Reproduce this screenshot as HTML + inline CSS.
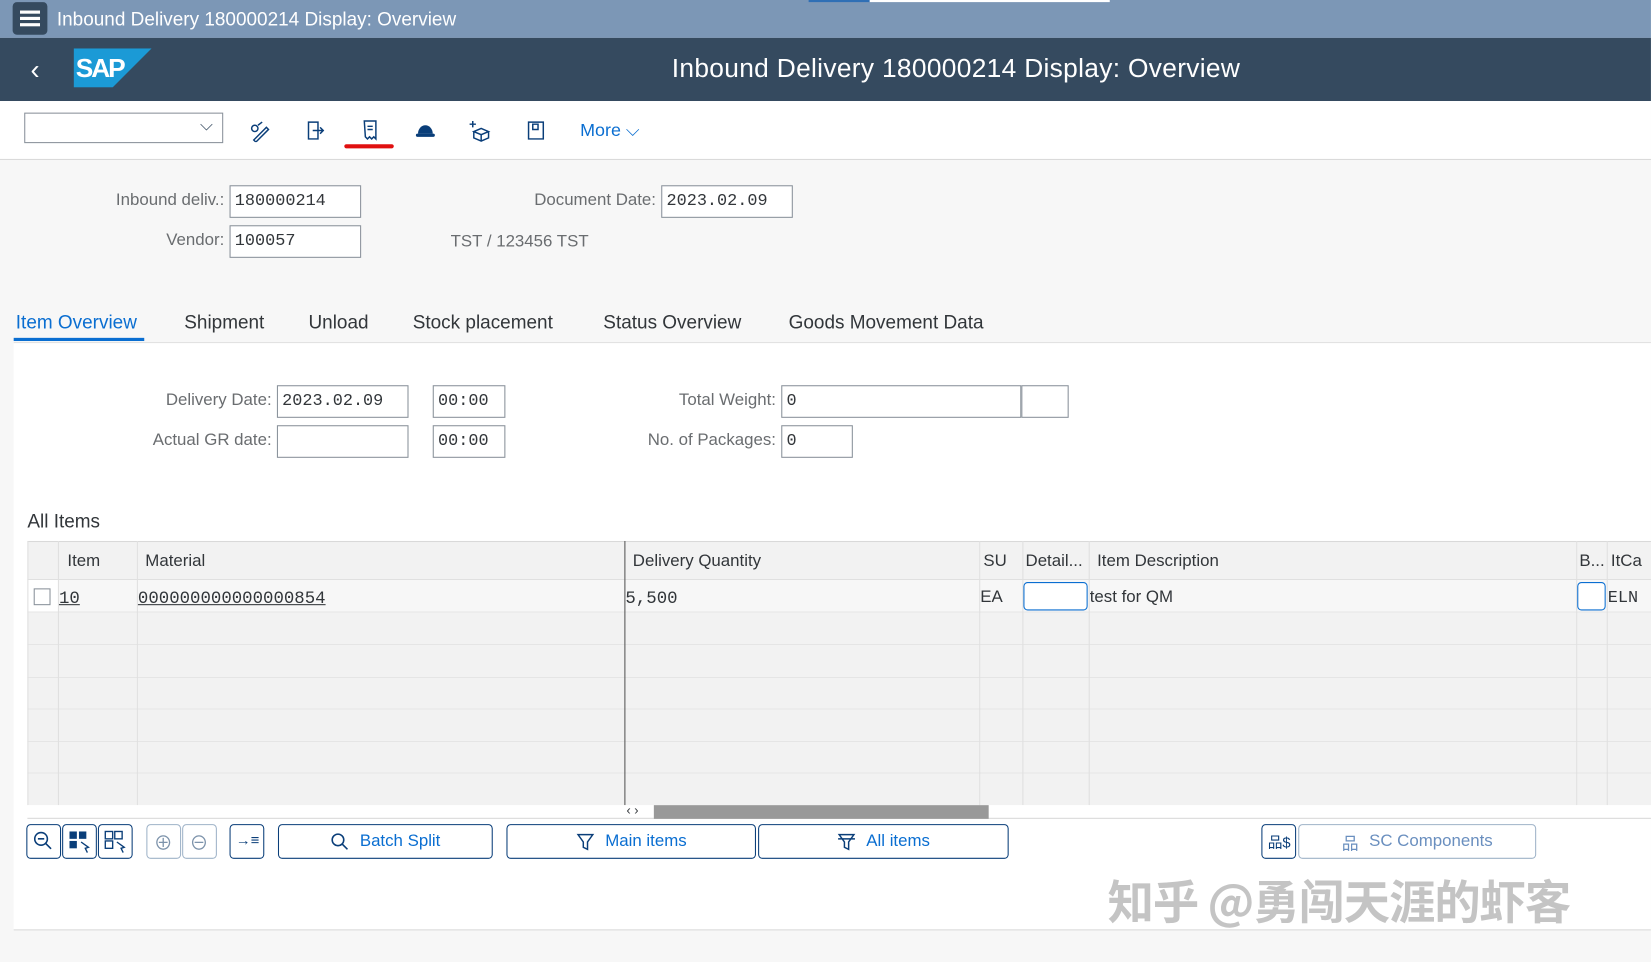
<!DOCTYPE html>
<html><head><meta charset="utf-8"><style>
*{box-sizing:border-box;margin:0;padding:0}
body{width:1651px;height:962px;overflow:hidden;background:#f7f7f7;font-family:"Liberation Sans","Noto Sans CJK SC",sans-serif;color:#32363a}
#w{position:absolute;left:0;top:0;width:1568px;height:914px;transform:scale(1.0529,1.0525);transform-origin:0 0;background:#f7f7f7}
.a{position:absolute}
.inp{position:absolute;background:#fff;border:1px solid #89919a;font-family:"Liberation Mono",monospace;font-size:16px;padding:5px 4px 0;height:31px;color:#32363a}
.lbl{position:absolute;font-size:16px;color:#6a6d70;text-align:right}
.tab{position:absolute;top:296px;font-size:18px;color:#32363a}
.btn{position:absolute;top:783px;height:33px;border:1px solid #0a3e79;border-radius:4px;background:#fff;color:#0a6ed1;font-size:16px;display:flex;align-items:center;justify-content:center;gap:10px}
.ib{position:absolute;top:783px;width:33px;height:33px;border:1px solid #0a3e79;border-radius:4px;background:#fff}
.ico{position:absolute;top:113px;width:22px;height:22px}
</style></head><body><div id="w">
<div class="a" style="left:0;top:0;width:1568px;height:36px;background:#7c97b6"></div>
<div class="a" style="left:768px;top:0;width:58px;height:2px;background:#2f6fb5"></div>
<div class="a" style="left:826px;top:0;width:228px;height:2px;background:#fff"></div>
<div class="a" style="left:12px;top:2px;width:33px;height:31px;background:#354a5f;border-radius:4px"></div>
<div class="a" style="left:19px;top:10px;width:19px;height:3px;background:#fff;box-shadow:0 6px 0 #fff,0 12px 0 #fff"></div>
<div class="a" style="left:54px;top:8px;font-size:18px;color:#fff">Inbound Delivery 180000214 Display: Overview</div>
<div class="a" style="left:0;top:36px;width:1568px;height:60px;background:#354a5f"></div>
<div class="a" style="left:29px;top:51px;font-size:26px;color:#fff">‹</div>
<svg class="a" style="left:70px;top:46px" width="74" height="37"><polygon points="0,0 74,0 37,37 0,37" fill="#1b9ad6"/><text x="2" y="27" font-family="Liberation Sans" font-weight="bold" font-size="25" fill="#fff" letter-spacing="-2">SAP</text></svg>
<div class="a" style="left:638px;top:51px;font-size:25px;color:#fff;letter-spacing:0.3px">Inbound Delivery 180000214 Display: Overview</div>
<div class="a" style="left:0;top:96px;width:1568px;height:56px;background:#fff;border-bottom:1px solid #d9d9d9"></div>
<div class="a" style="left:23px;top:107px;width:189px;height:29px;border:1px solid #89919a;background:#fff"></div>
<div class="a" style="left:190px;top:111px;font-size:16px;color:#354a5f">⌵</div>
<svg class="ico" style="left:236px" viewBox="0 0 22 22" fill="none" stroke="#0a3e79" stroke-width="1.4"><circle cx="6" cy="9" r="3"/><path d="M9 6l4-3M5 20l12-12 2 2-12 12z"/></svg>
<svg class="ico" style="left:289px" viewBox="0 0 22 22" fill="none" stroke="#0a3e79" stroke-width="1.4"><path d="M4 3h9v16H4zM8 11h10M15 8l3 3-3 3"/></svg>
<svg class="ico" style="left:341px" viewBox="0 0 22 22" fill="none" stroke="#0a3e79" stroke-width="1.4"><path d="M5 2h11v17l-2-2-2 2-2-2-2 2-2-2zM8 7h5M8 10h5"/></svg>
<div class="a" style="left:327px;top:137px;width:47px;height:4px;background:#e01010;border-radius:2px"></div>
<svg class="ico" style="left:393px" viewBox="0 0 22 22"><path d="M4 14a7 8 0 0 1 14 0z" fill="#0a3e79"/><rect x="2" y="14" width="18" height="3" rx="1.5" fill="#0a3e79"/></svg>
<svg class="ico" style="left:445px" viewBox="0 0 22 22" fill="none" stroke="#0a3e79" stroke-width="1.4"><path d="M4 2v6M1 5h6M5 12l7-3 7 3-7 3zM5 12v6l7 3 7-3v-6M12 15v6"/></svg>
<svg class="ico" style="left:498px" viewBox="0 0 22 22" fill="none" stroke="#0a3e79" stroke-width="1.4"><path d="M4 3h14v16H4zM8 5h5v5H8z"/></svg>
<div class="a" style="left:551px;top:114px;font-size:17px;color:#0a6ed1">More ⌵</div>
<div class="lbl" style="left:60px;top:182px;width:153px">Inbound deliv.:</div>
<div class="inp" style="left:218px;top:176px;width:125px">180000214</div>
<div class="lbl" style="left:60px;top:220px;width:153px">Vendor:</div>
<div class="inp" style="left:218px;top:214px;width:125px">100057</div>
<div class="lbl" style="left:450px;top:182px;width:173px">Document Date:</div>
<div class="inp" style="left:628px;top:176px;width:125px">2023.02.09</div>
<div class="a" style="left:428px;top:221px;font-size:16px;color:#6a6d70">TST / 123456 TST</div>
<div class="tab" style="left:15px;color:#0a6ed1">Item Overview</div>
<div class="a" style="left:13px;top:321px;width:124px;height:3px;background:#0a6ed1"></div>
<div class="tab" style="left:175px">Shipment</div>
<div class="tab" style="left:293px">Unload</div>
<div class="tab" style="left:392px">Stock placement</div>
<div class="tab" style="left:573px">Status Overview</div>
<div class="tab" style="left:749px">Goods Movement Data</div>
<div class="a" style="left:13px;top:325px;width:1555px;height:559px;background:#fff;border-top:1px solid #e0e0e0;border-bottom:1px solid #d9d9d9"></div>
<div class="lbl" style="left:90px;top:372px;width:168px">Delivery Date:</div>
<div class="inp" style="left:263px;top:366px;width:125px">2023.02.09</div>
<div class="inp" style="left:411px;top:366px;width:69px">00:00</div>
<div class="lbl" style="left:90px;top:410px;width:168px">Actual GR date:</div>
<div class="inp" style="left:263px;top:404px;width:125px"></div>
<div class="inp" style="left:411px;top:404px;width:69px">00:00</div>
<div class="lbl" style="left:560px;top:372px;width:177px">Total Weight:</div>
<div class="inp" style="left:742px;top:366px;width:228px">0</div>
<div class="inp" style="left:970px;top:366px;width:45px"></div>
<div class="lbl" style="left:560px;top:410px;width:177px">No. of Packages:</div>
<div class="inp" style="left:742px;top:404px;width:68px">0</div>
<div class="a" style="left:26px;top:485px;font-size:18px">All Items</div>
<div class="a" style="left:26px;top:514px;width:1542px;height:251px;background:#f2f2f2;border-top:1px solid #d9d9d9"></div>
<div class="a" style="left:26px;top:551px;width:1542px;height:31px;background:#f7f7f7"></div>
<div class="a" style="left:26px;top:551px;width:29px;height:31px;background:#fff"></div>
<div class="a" style="left:26px;top:514px;width:1542px;height:251px;background:repeating-linear-gradient(180deg,transparent 0 36px,#e0e0e0 36px 37px,transparent 37px 67px,#e5e5e5 67px 68px,transparent 68px 98px,#e5e5e5 98px 99px,transparent 99px 129px,#e5e5e5 129px 130px,transparent 130px 159px,#e5e5e5 159px 160px,transparent 160px 190px,#e5e5e5 190px 191px,transparent 191px 220px,#e5e5e5 220px 221px,transparent 221px 260px)"></div>
<div class="a" style="left:26px;top:514px;width:1px;height:251px;background:#e0e0e0"></div>
<div class="a" style="left:55px;top:514px;width:1px;height:251px;background:#e0e0e0"></div>
<div class="a" style="left:130px;top:514px;width:1px;height:251px;background:#e0e0e0"></div>
<div class="a" style="left:593px;top:514px;width:1px;height:251px;background:#555"></div>
<div class="a" style="left:930px;top:514px;width:1px;height:251px;background:#e0e0e0"></div>
<div class="a" style="left:971px;top:514px;width:1px;height:251px;background:#e0e0e0"></div>
<div class="a" style="left:1034px;top:514px;width:1px;height:251px;background:#e0e0e0"></div>
<div class="a" style="left:1497px;top:514px;width:1px;height:251px;background:#e0e0e0"></div>
<div class="a" style="left:1526px;top:514px;width:1px;height:251px;background:#e0e0e0"></div>
<div style="font-size:16px;color:#32363a">
<div class="a" style="left:64px;top:525px">Item</div>
<div class="a" style="left:138px;top:525px">Material</div>
<div class="a" style="left:601px;top:525px">Delivery Quantity</div>
<div class="a" style="left:934px;top:525px">SU</div>
<div class="a" style="left:974px;top:525px">Detail...</div>
<div class="a" style="left:1042px;top:525px">Item Description</div>
<div class="a" style="left:1500px;top:525px">B...</div>
<div class="a" style="left:1530px;top:525px">ItCa</div>
</div>
<div class="a" style="left:32px;top:559px;width:16px;height:16px;border:1px solid #89919a;background:#fff"></div>
<div class="a" style="left:56px;top:559px;font-family:'Liberation Mono',monospace;font-size:16.5px;text-decoration:underline">10</div>
<div class="a" style="left:131px;top:559px;font-family:'Liberation Mono',monospace;font-size:16.5px;text-decoration:underline">000000000000000854</div>
<div class="a" style="left:594px;top:559px;font-family:'Liberation Mono',monospace;font-size:16.5px">5,500</div>
<div class="a" style="left:931px;top:559px;font-size:16px">EA</div>
<div class="a" style="left:972px;top:553px;width:61px;height:27px;border:1px solid #0a6ed1;border-radius:4px;background:#fff"></div>
<div class="a" style="left:1035px;top:559px;font-size:16px">test for QM</div>
<div class="a" style="left:1498px;top:553px;width:27px;height:27px;border:1px solid #0a6ed1;border-radius:4px;background:#fff"></div>
<div class="a" style="left:1527px;top:559px;font-family:'Liberation Mono',monospace;font-size:16px">ELN</div>
<div class="a" style="left:26px;top:765px;width:1542px;height:13px;background:#fff;border-bottom:1px solid #d9d9d9"></div>
<div class="a" style="left:595px;top:763px;font-size:12px">‹ ›</div>
<div class="a" style="left:621px;top:765px;width:318px;height:13px;background:#999"></div>
<div class="ib" style="left:25px"></div>
<svg class="a" style="left:31px;top:789px" width="20" height="20" fill="none" stroke="#0a3e79" stroke-width="1.5"><circle cx="8" cy="8" r="6"/><path d="M12.5 12.5l5 5M5 8h6"/></svg>
<div class="ib" style="left:59px"></div>
<svg class="a" style="left:64px;top:788px" width="24" height="24"><rect x="2" y="2" width="7" height="7" fill="#0a3e79"/><rect x="11" y="2" width="7" height="7" fill="#0a3e79"/><rect x="2" y="11" width="7" height="7" fill="#0a3e79"/><path d="M13 12l7 5-3 1 2 4" fill="none" stroke="#0a3e79" stroke-width="1.3"/></svg>
<div class="ib" style="left:93px"></div>
<svg class="a" style="left:98px;top:788px" width="24" height="24" fill="none" stroke="#0a3e79" stroke-width="1.3"><rect x="2" y="2" width="7" height="7"/><rect x="11" y="2" width="7" height="7"/><rect x="2" y="11" width="7" height="7"/><path d="M13 12l7 5-3 1 2 4"/></svg>
<div class="ib" style="left:139px;border-color:#9fb3c8"></div><div class="a" style="left:146px;top:787px;font-size:18px;color:#7d93ab">⊕</div>
<div class="ib" style="left:173px;border-color:#9fb3c8"></div><div class="a" style="left:180px;top:787px;font-size:18px;color:#7d93ab">⊖</div>
<div class="ib" style="left:218px"></div><div class="a" style="left:224px;top:790px;font-size:14px;color:#0a3e79">→≡</div>
<div class="btn" style="left:264px;width:204px"><svg width="18" height="18" fill="none" stroke="#0a3e79" stroke-width="1.5"><circle cx="7" cy="7" r="5.5"/><path d="M11 11l5 5"/></svg>Batch Split</div>
<div class="btn" style="left:481px;width:237px"><svg width="18" height="18" fill="none" stroke="#0a3e79" stroke-width="1.4"><path d="M2 2h14l-5 7v7l-4-2V9z"/></svg>Main items</div>
<div class="btn" style="left:720px;width:238px"><svg width="18" height="18" fill="none" stroke="#0a3e79" stroke-width="1.4"><path d="M2 2h14l-5 7v7l-4-2V9zM1 6h16"/></svg>All items</div>
<div class="ib" style="left:1198px"></div><div class="a" style="left:1204px;top:790px;font-size:14px;color:#0a3e79">品$</div>
<div class="btn" style="left:1233px;width:226px;border-color:#9fb3c8;color:#6a8fbf"><span>品</span>SC Components</div>
<div class="a" style="left:1052px;top:822px;font-size:44px;font-weight:bold;color:#c4c4c4;font-family:'Noto Sans CJK SC',sans-serif;letter-spacing:-1px">知乎 @勇闯天涯的虾客</div>
</div></body></html>
